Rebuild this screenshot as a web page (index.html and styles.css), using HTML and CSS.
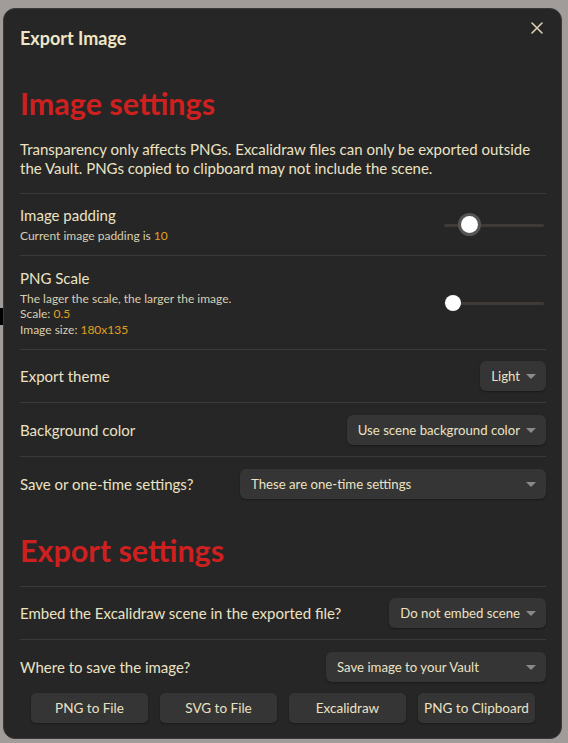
FILE: index.html
```
<!DOCTYPE html>
<html>
<head>
<meta charset="utf-8">
<link rel="stylesheet" href="styles.css">
</head>
<body>
<div class="edge-mark"></div>
<div class="modal">
  <button class="close" aria-label="Close">
    <svg width="14" height="14" viewBox="0 0 14 14"><path d="M2 2L12 12M12 2L2 12" stroke="#d9d0b4" stroke-width="1.6" stroke-linecap="round"/></svg>
  </button>
  <div class="modal-title">Export Image</div>
  <h1 class="section first">Image settings</h1>
  <p class="intro">Transparency only affects PNGs. Excalidraw files can only be exported outside the Vault. PNGs copied to clipboard may not include the scene.</p>

  <div class="item tall">
    <div class="info">
      <div class="name">Image padding</div>
      <div class="desc">Current image padding is <span class="hl">10</span></div>
    </div>
    <div class="slider"><div class="track"></div><div class="thumb focus" style="left:25px"></div></div>
  </div>

  <div class="item tall2">
    <div class="info">
      <div class="name">PNG Scale</div>
      <div class="desc">The lager the scale, the larger the image.<br>Scale: <span class="hl">0.5</span><br>Image size: <span class="hl">180x135</span></div>
    </div>
    <div class="slider"><div class="track"></div><div class="thumb" style="left:9px"></div></div>
  </div>

  <div class="item">
    <div class="name">Export theme</div>
    <div class="dropdown">Light<span class="caret"></span></div>
  </div>

  <div class="item row54">
    <div class="name">Background color</div>
    <div class="dropdown">Use scene background color<span class="caret"></span></div>
  </div>

  <div class="item plain">
    <div class="name">Save or one-time settings?</div>
    <div class="dropdown wide">These are one-time settings<span class="caret"></span></div>
  </div>

  <h1 class="section second">Export settings</h1>

  <div class="item bordered">
    <div class="name">Embed the Excalidraw scene in the exported file?</div>
    <div class="dropdown">Do not embed scene<span class="caret"></span></div>
  </div>

  <div class="item plain">
    <div class="name">Where to save the image?</div>
    <div class="dropdown vault">Save image to your Vault<span class="caret"></span></div>
  </div>

  <div class="buttons">
    <button class="btn">PNG to File</button>
    <button class="btn">SVG to File</button>
    <button class="btn">Excalidraw</button>
    <button class="btn">PNG to Clipboard</button>
  </div>
</div>
</body>
</html>
```
FILE: styles.css
```
* { box-sizing: border-box; }
html, body { margin: 0; padding: 0; }
body {
  background: #a19c99;
  width: 568px;
  height: 743px;
  overflow: hidden;
  position: relative;
  font-family: "Lato", "Noto Sans", sans-serif;
  color: #ebe2c4;
}
.edge-mark {
  position: absolute;
  left: 0; top: 308px;
  width: 3px; height: 17px;
  background: #000;
}
.modal {
  position: relative;
  margin: 8px 0 0 3px;
  width: 559px;
  height: 731px;
  background: #262626;
  border: 1px solid #3a3a3a;
  border-radius: 12px;
  padding: 18px 15px 0 16px;
}
.close {
  position: absolute;
  top: 8px; right: 13px;
  background: none; border: 0; padding: 4px;
  cursor: pointer;
}
.close svg { display: block; }
.modal-title {
  font-size: 18px;
  font-weight: 700;
  line-height: 22px;
  color: #efe6c8;
}
h1.section {
  margin: 0;
  color: #cf2020;
  font-size: 30.5px;
  font-weight: 700;
  line-height: 36px;
}
h1.section.first { padding-top: 36px; padding-bottom: 19px; }
h1.section.second { padding-top: 22px; padding-bottom: 18px; }
.intro {
  margin: 0;
  font-size: 15px;
  line-height: 19px;
  padding-bottom: 15px;
  border-bottom: 1px solid #3a3a3a;
}
.item {
  display: flex;
  align-items: center;
  justify-content: space-between;
  height: 53px;
  border-bottom: 1px solid #3a3a3a;
  font-size: 15px;
}
.item.row54 { height: 54px; }
.item.plain { border-bottom: 0; }
.item.bordered { border-top: 1px solid #3a3a3a; height: 54px; }
.item.tall { height: 62px; }
.item.tall2 { height: 94px; }
.name { font-size: 15px; line-height: 20px; }
.desc { font-size: 12px; line-height: 15.5px; color: #d8cfb1; margin-top: 3px; }
.hl { color: #e0a020; }
.slider { position: relative; width: 100px; height: 20px; margin-right: 2px; }
.track { position: absolute; left: 0; right: 0; top: 9px; height: 3px; background: #403a36; border-radius: 2px; }
.thumb {
  position: absolute; top: 2px;
  width: 16px; height: 16px; margin-left: -8px;
  background: #fff; border-radius: 50%;
}
.thumb.focus { box-shadow: 0 0 0 3px #555; top: 1px; width: 17px; height: 17px; }
.dropdown {
  position: relative;
  height: 30px;
  line-height: 30px;
  background: #353535;
  border-radius: 6px;
  box-shadow: 0 1px 2px rgba(0,0,0,0.35);
  font-size: 13.2px;
  padding: 0 26px 0 11px;
  color: #ebe2c4;
  white-space: nowrap;
}
.dropdown.wide { width: 306px; }
.dropdown.vault { width: 220px; }
.caret {
  position: absolute;
  right: 10px; top: 13px;
  width: 0; height: 0;
  border-left: 5px solid transparent;
  border-right: 5px solid transparent;
  border-top: 5px solid #8a8a8a;
}
.buttons {
  display: flex;
  justify-content: center;
  gap: 12px;
}
.btn {
  width: 117px;
  height: 30px;
  background: #353535;
  border: 0;
  border-radius: 5px;
  box-shadow: 0 1px 2px rgba(0,0,0,0.35);
  color: #ebe2c4;
  font-family: inherit;
  font-size: 13.5px;
  padding: 0;
}
```
